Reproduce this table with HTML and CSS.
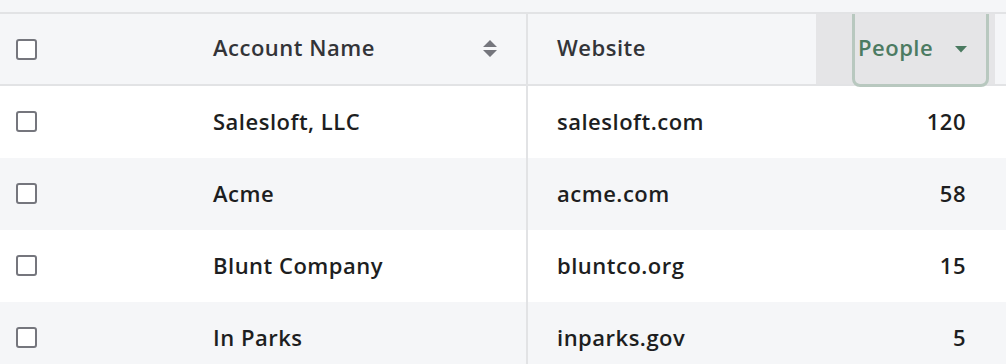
FILE: index.html
```html
<!DOCTYPE html>
<html lang="en">
<head>
<meta charset="utf-8">
<title>Accounts</title>
<link rel="stylesheet" href="styles.css">
</head>
<body>
<div class="table">
  <div class="top-strip"></div>
  <div class="row head">
    <div class="cell check"><span class="box"></span></div>
    <div class="cell name"><span>Account Name</span>
      <svg class="sort" width="14" height="18" viewBox="0 0 14 18"><path d="M7 0 L14 7 H0 Z M0 10 H14 L7 17 Z" fill="#75767d"/></svg>
    </div>
    <div class="cell site">Website</div>
    <div class="cell people active">
      <div class="ring"></div>
      <span class="label">People</span>
      <svg class="caret" width="12" height="7" viewBox="0 0 12 7"><path d="M0 0 H12 L6 6.5 Z" fill="#4a7a60"/></svg>
    </div>
    <div class="cell extra"></div>
  </div>
  <div class="row">
    <div class="cell check"><span class="box"></span></div>
    <div class="cell name">Salesloft, LLC</div>
    <div class="cell site">salesloft.com</div>
    <div class="cell people">120</div>
    <div class="cell extra"></div>
  </div>
  <div class="row alt">
    <div class="cell check"><span class="box"></span></div>
    <div class="cell name">Acme</div>
    <div class="cell site">acme.com</div>
    <div class="cell people">58</div>
    <div class="cell extra"></div>
  </div>
  <div class="row">
    <div class="cell check"><span class="box"></span></div>
    <div class="cell name">Blunt Company</div>
    <div class="cell site">bluntco.org</div>
    <div class="cell people">15</div>
    <div class="cell extra"></div>
  </div>
  <div class="row alt">
    <div class="cell check"><span class="box"></span></div>
    <div class="cell name">In Parks</div>
    <div class="cell site">inparks.gov</div>
    <div class="cell people">5</div>
    <div class="cell extra"></div>
  </div>
</div>
</body>
</html>
```
FILE: styles.css
```css
* { box-sizing: border-box; }
html, body { margin: 0; padding: 0; background: #fff; }
body {
  font-family: "Open Sans", "Lato", sans-serif;
  color: #1d1e21;
  overflow: hidden;
}
.table { width: 1006px; }
.top-strip {
  height: 14px;
  background: #f5f6f8;
  border-bottom: 2px solid #e2e3e5;
  position: relative;
  z-index: 2;
}
.row {
  display: grid;
  grid-template-columns: 183px 343px 290px 179px 1fr;
  height: 72px;
  background: #fff;
}
.row.alt { background: #f5f6f8; }
.row.head {
  height: 72px;
  background: #f5f6f8;
  border-bottom: 2px solid #e2e3e5;
  color: #333438;
}
.cell {
  display: flex;
  align-items: center;
  font-size: 22px;
  font-weight: 600;
  letter-spacing: 0.5px;
  line-height: 1;
  padding-bottom: 2px;
}
.head .cell { padding-bottom: 4px; }
.check { padding-left: 16px; }
.box {
  width: 21px;
  height: 21px;
  border: 2.5px solid #75767d;
  border-radius: 3px;
  background: #fff;
}
.head .check .box { margin-top: 4px; }
.name { padding-left: 30px; padding-right: 29px; justify-content: space-between; }
.site { padding-left: 29px; border-left: 2px solid #e2e3e5; }
.people { justify-content: flex-end; padding-right: 29px; }
.head .people {
  position: relative;
  background: #e5e5e7;
  justify-content: flex-start;
  padding-left: 42px;
  padding-right: 0;
  color: #4c7b62;
  font-weight: 600;
}
.caret { margin-left: auto; margin-right: 28px; margin-top: 4px; }
.ring {
  position: absolute;
  left: 36px;
  right: 6px;
  top: -8px;
  bottom: -3px;
  border: 3px solid #b8c8bf;
  border-radius: 8px;
}
.sort { margin-top: 4px; }
```
